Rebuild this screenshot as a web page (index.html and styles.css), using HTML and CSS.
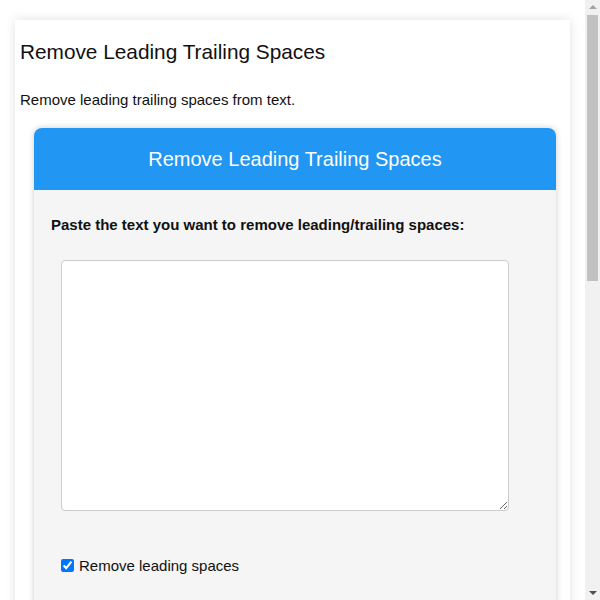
FILE: index.html
```html
<!DOCTYPE html>
<html lang="en">
<head>
<meta charset="utf-8">
<title>Remove Leading Trailing Spaces</title>
<link rel="stylesheet" href="styles.css">
</head>
<body>
<div class="page">
  <main class="card">
    <h1 class="title">Remove Leading Trailing Spaces</h1>
    <p class="intro">Remove leading trailing spaces from text.</p>
    <section class="tool">
      <header class="tool-head">Remove Leading Trailing Spaces</header>
      <div class="tool-body">
        <label class="field-label" for="input">Paste the text you want to remove leading/trailing spaces:</label>
        <textarea id="input" class="text-box"></textarea>
        <div class="options">
          <label class="option"><input type="checkbox" checked>Remove leading spaces</label>
          <label class="option"><input type="checkbox" checked>Remove trailing spaces</label>
        </div>
        <button class="btn" type="button">Remove Spaces</button>
        <label class="field-label" for="output">Result:</label>
        <textarea id="output" class="text-box" readonly></textarea>
        <button class="btn" type="button">Copy Result</button>
      </div>
    </section>
  </main>
</div>
<div class="scrollbar" aria-hidden="true">
  <div class="sb-btn"><span class="arrow-up"></span></div>
  <div class="sb-track"><div class="sb-thumb"></div></div>
  <div class="sb-btn"><span class="arrow-down"></span></div>
</div>
</body>
</html>
```
FILE: styles.css
```css
html, body {
  margin: 0;
  padding: 0;
  background: #fff;
  font-family: "Liberation Sans", Arial, sans-serif;
  color: #111;
}

.page {
  padding: 20px 30px 40px 15px;
}

.card {
  background: #fff;
  box-shadow: 0 0 10px rgba(0, 0, 0, 0.12);
  padding: 20px 5px 40px;
}

.title {
  font-size: 20.8px;
  font-weight: normal;
  margin: 0;
  line-height: 24px;
}

.intro {
  font-size: 15px;
  margin: 27px 0 20px;
  line-height: 17px;
}

.tool {
  margin-left: 14px;
  width: 522px;
  border-radius: 8px;
  overflow: hidden;
  background: #f5f5f5;
  box-shadow: 0 0 6px rgba(0, 0, 0, 0.2);
}

.tool-head {
  background: #2196f3;
  color: #fff;
  font-size: 20px;
  text-align: center;
  height: 62px;
  line-height: 62px;
}

.tool-body {
  padding: 26px 17px 30px;
  display: flex;
  flex-direction: column;
  align-items: flex-start;
}

.field-label {
  font-size: 15px;
  font-weight: bold;
  line-height: 17px;
}

.text-box {
  box-sizing: border-box;
  width: 448px;
  height: 251px;
  margin: 27px 0 0 10px;
  border: 1px solid #ccc;
  border-radius: 4px;
  background: #fff;
  padding: 8px;
  font-family: "Liberation Sans", Arial, sans-serif;
  font-size: 15px;
}

.options {
  margin: 45px 0 0 6px;
  display: flex;
  flex-direction: column;
  gap: 30px;
}

.option {
  font-size: 15px;
  line-height: 19px;
  display: flex;
  align-items: center;
}

.option input {
  width: 13px;
  height: 13px;
  margin: 3px 5px 3px 4px;
}

.btn {
  margin: 30px 0 30px 10px;
  background: #2196f3;
  color: #fff;
  border: 0;
  border-radius: 4px;
  padding: 10px 20px;
  font-size: 15px;
  font-family: "Liberation Sans", Arial, sans-serif;
}

/* drawn window scrollbar */
.scrollbar {
  position: fixed;
  top: 0;
  right: 0;
  width: 15px;
  height: 100%;
  background: #f1f1f1;
  display: flex;
  flex-direction: column;
}

.sb-btn {
  height: 14px;
  display: flex;
  align-items: center;
  justify-content: center;
}

.arrow-up {
  width: 0;
  height: 0;
  border-left: 4px solid transparent;
  border-right: 4px solid transparent;
  border-bottom: 4px solid #a3a3a3;
}

.arrow-down {
  width: 0;
  height: 0;
  border-left: 4px solid transparent;
  border-right: 4px solid transparent;
  border-top: 4px solid #505050;
}

.sb-track {
  flex: 1;
  padding: 1px 2px 0;
}

.sb-thumb {
  height: 266px;
  background: #c1c1c1;
}
```
